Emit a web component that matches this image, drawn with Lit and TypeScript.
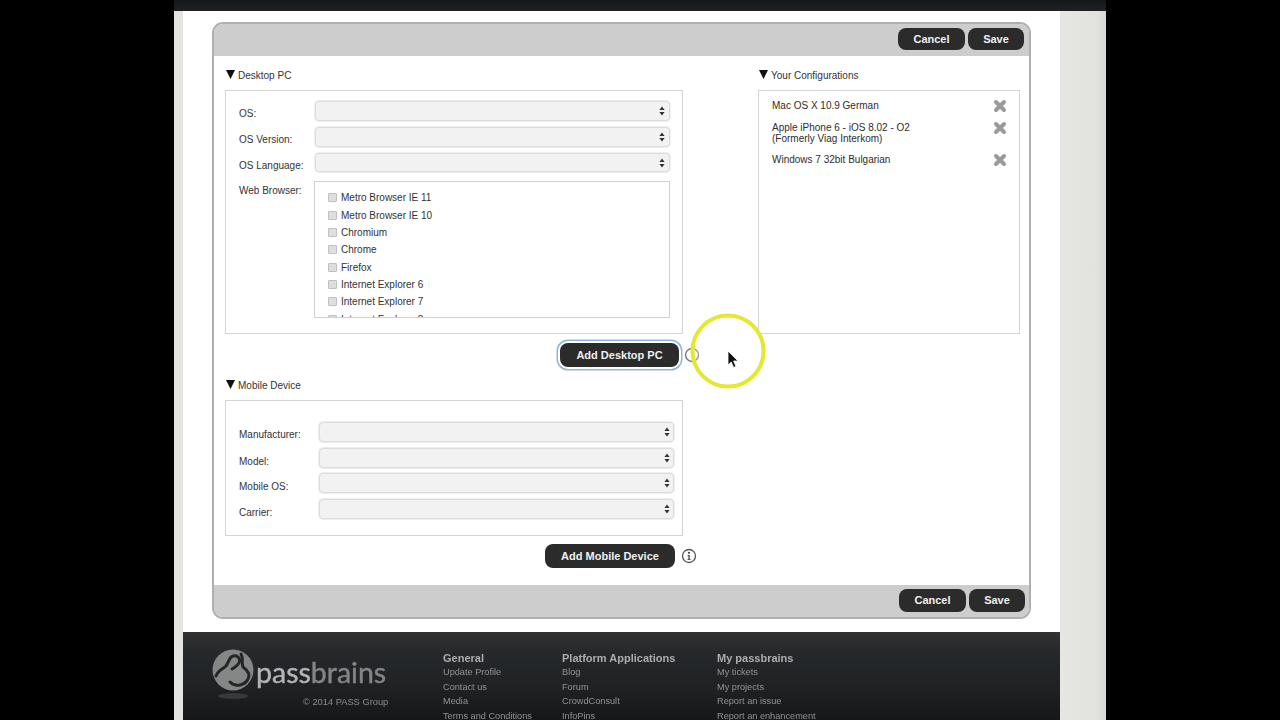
import { LitElement, html, css, svg } from "lit";
import { customElement } from "lit/decorators.js";

const arrows = html`<svg class="arrows" width="6" height="10" viewBox="0 0 6 10"><path d="M3 0.5 5.6 4H.4zM3 9.5 .4 6h5.2z" fill="#333"/></svg>`;
const tri = html`<svg class="tri" width="9" height="9" viewBox="0 0 9 9"><path d="M0 0h9L4.5 9z" fill="#111"/></svg>`;
const cross = html`<svg class="x" width="14" height="14" viewBox="0 0 14 14"><path d="M3 3l8 8M11 3l-8 8" stroke="#9a9a9a" stroke-width="4" stroke-linecap="round"/></svg>`;
const ring = html`<svg class="info" width="16" height="16" viewBox="0 0 16 16"><circle cx="8" cy="8" r="6.5" fill="none" stroke="#777" stroke-width="1.4"/></svg>`;
const infoIcon = html`<svg class="info" width="16" height="16" viewBox="0 0 16 16"><circle cx="8" cy="8" r="6.5" fill="none" stroke="#555" stroke-width="1.3"/><circle cx="8" cy="4.8" r="1.1" fill="#444"/><path d="M6.6 7h2.1v4.2h1v.9H6.4v-.9h1V7.9h-.8z" fill="#444"/></svg>`;
const logo = html`<svg class="mark" width="48" height="58" viewBox="0 0 48 58">
  <ellipse cx="24" cy="50" rx="15" ry="3" fill="#37393b"/>
  <circle cx="24" cy="24" r="20.5" fill="#858686"/>
  ${svg`<path d="M7 30C9 24 14 23 17 20C20 16 20 11 24 10C29 9 32 13 30 17C28 20 26 21 23 23" fill="none" stroke="#232527" stroke-width="3" stroke-linecap="round"/>
  <path d="M32 8C35 13 32 17 34 21C38 24 42 28 39 33C36 39 27 42 21 36" fill="none" stroke="#232527" stroke-width="3" stroke-linecap="round"/>`}
</svg>`;

const browsers = ["Metro Browser IE 11", "Metro Browser IE 10", "Chromium", "Chrome", "Firefox", "Internet Explorer 6", "Internet Explorer 7", "Internet Explorer 8"];
const desktopRows = ["OS:", "OS Version:", "OS Language:"];
const mobileRows = ["Manufacturer:", "Model:", "Mobile OS:", "Carrier:"];
const footerCols = [
  { cls: "c1", title: "General", items: ["Update Profile", "Contact us", "Media", "Terms and Conditions"] },
  { cls: "c2", title: "Platform Applications", items: ["Blog", "Forum", "CrowdConsult", "InfoPins"] },
  { cls: "c3", title: "My passbrains", items: ["My tickets", "My projects", "Report an issue", "Report an enhancement"] },
];

@customElement("app-root")
export class AppRoot extends LitElement {
  static styles = css`
    :host { display: block; width: 1280px; height: 720px; background: #000; overflow: hidden; position: relative;
      font-family: "Liberation Sans", Arial, sans-serif; font-size: 10px; color: #333; }
    .screen { width: 932px; height: 720px; margin-left: 174px; display: flex; flex-direction: column; filter: blur(0.45px); }
    .top { height: 11px; flex: none; background: linear-gradient(#15181a, #1e2123); }
    .mid { flex: 1; display: flex; min-height: 0; }
    .lstrip { width: 9px; background: #e3e3df; flex: none; }
    .rstrip { width: 46px; background: linear-gradient(90deg, #e6e6e3, #e2e2de 80%, #d8d8d4); flex: none; }
    .page { width: 877px; background: #fff; padding-top: 11px; display: flex; flex-direction: column; box-sizing: border-box; }
    .panel { width: 819px; height: 597px; margin-left: 29px; box-sizing: border-box; border: 2px solid #afafaf; border-radius: 11px; overflow: hidden; display: flex; flex-direction: column; flex: none; }
    .bar { height: 32px; background: #cdcdcd; display: flex; justify-content: flex-end; gap: 3px; flex: none; box-sizing: border-box; }
    .bar.t { padding: 4px 5px 0 0; }
    .bar.b { padding: 4px 4px 0 0; }
    .btn { height: 22px; border-radius: 8px; background: #2b2b2c; color: #f0f0f0; font-weight: bold; font-size: 11px; display: flex; align-items: center; justify-content: center; box-sizing: border-box; padding-bottom: 1px; }
    .bar.b .btn { height: 23px; }
    .cancel { width: 67px; }
    .save { width: 56px; }
    .content { flex: 1; display: flex; align-items: flex-start; padding-left: 11px; }
    .left { width: 458px; flex: none; }
    .right { width: 262px; margin-left: 75px; flex: none; }
    .head { height: 14px; margin-top: 12px; margin-bottom: 8px; display: flex; align-items: center; gap: 3px; padding-left: 1px; }
    .tri { flex: none; margin-top: -2px; }
    .box { box-sizing: border-box; border: 1px solid #d4d4d4; }
    .box.desk { height: 244px; padding: 9px 11px 0 13px; }
    .box.mob { height: 136px; padding: 20px 7px 0 13px; }
    .box.conf { height: 244px; padding: 9px 13px 0; display: flex; flex-direction: column; }
    .row { display: flex; margin-bottom: 4px; }
    .lab { flex: none; padding-top: 8px; line-height: 12px; }
    .desk .lab { width: 75px; }
    .mob .lab { width: 79px; padding-top: 9px; }
    .mob .row:first-child .lab { padding-top: 8px; }
    .sel { flex: 1; height: 18px; margin: 1px; box-sizing: content-box; background: #f2f2f2; border: 1px solid #dcdcdc; border-radius: 4px; box-shadow: 0 0 0 1px #eeeeee; display: flex; align-items: center; justify-content: flex-end; padding-right: 4px; }
    .mob .sel { padding-right: 3px; }
    .mob .row { margin-bottom: 3.6px; }
    .desk .row:nth-child(3) { margin-bottom: 8px; }
    .desk .row:nth-child(3) .sel { height: 17px; }
    .desk .lab.web { padding-top: 4px; }
    .list { flex: none; width: 356px; height: 137px; box-sizing: border-box; border: 1px solid #d0d0d0; overflow: hidden; padding: 7.35px 0 0 13px; }
    .item { height: 17.3px; display: flex; align-items: center; gap: 4px; }
    .cb { width: 9px; height: 9px; flex: none; box-sizing: border-box; background: #dedede; border: 1px solid #c0c0c0; border-radius: 1px; }
    .act { display: flex; align-items: center; gap: 5px; margin-top: 9px; height: 24px; }
    .act.d { padding-left: 335px; }
    .act.m { padding-left: 320px; margin-top: 8px; gap: 6px; }
    .info { flex: none; }
    .add { flex: none; height: 24px; border-radius: 8px; background: #2b2b2c; color: #f0f0f0; font-weight: bold; font-size: 11px; display: flex; align-items: center; justify-content: center; }
    .add.desk-b { width: 119px; box-shadow: 0 0 0 2px #fff, 0 0 0 3.5px #8fb6e0; }
    .add.mob-b { width: 130px; }
    .sec2 { margin-top: 11px; }
    .conf-row { display: flex; justify-content: space-between; line-height: 11px; color: #2d2d2d; }
    .conf-row.r1 { margin-bottom: 9px; }
    .conf-row.r2 { margin-bottom: 10px; }
    .x { flex: none; margin: -1px -1px 0 0; }
    .gap { height: 13px; flex: none; }
    .foot { height: 88px; flex: none; box-sizing: border-box; display: flex; background: linear-gradient(#313131 0, #26292c 20px, #1f2123 55px, #161718 100%); color: #929292; font-size: 9.2px; }
    .brand { width: 231px; margin-left: 29px; flex: none; position: relative; box-sizing: border-box; padding-top: 14px; }
    .brand-top { display: flex; align-items: flex-start; gap: 0; }
    .mark { margin-left: -3px; flex: none; }
    .word { font-family: Lato, sans-serif; font-size: 28.5px; line-height: 30px; margin-top: 11px; color: #b4b4b4; margin-left: -1px; -webkit-text-stroke: 0.4px currentColor; }
    .word span { color: #858585; }
    .copy { position: absolute; left: 91px; top: 65px; font-size: 9.3px; color: #8c8c8c; white-space: nowrap; }
    .col { flex: none; padding-top: 20px; }
    .col.c1 { width: 119px; }
    .col.c2 { width: 155px; }
    .col h4 { margin: 0; font-size: 11px; line-height: 13px; font-weight: bold; color: #adadad; }
    .col div { line-height: 14.5px; white-space: nowrap; }
    .over { position: absolute; left: 0; top: 0; pointer-events: none; }
  `;

  render() {
    return html`
      <div class="screen">
        <div class="top"></div>
        <div class="mid">
          <div class="lstrip"></div>
          <div class="page">
            <div class="panel">
              <div class="bar t"><div class="btn cancel">Cancel</div><div class="btn save">Save</div></div>
              <div class="content">
                <div class="left">
                  <div class="head">${tri}<span>Desktop PC</span></div>
                  <div class="box desk">
                    ${desktopRows.map((l) => html`<div class="row"><div class="lab">${l}</div><div class="sel">${arrows}</div></div>`)}
                    <div class="row">
                      <div class="lab web">Web Browser:</div>
                      <div class="list">
                        ${browsers.map((b) => html`<div class="item"><span class="cb"></span><span>${b}</span></div>`)}
                      </div>
                    </div>
                  </div>
                  <div class="act d"><div class="add desk-b">Add Desktop PC</div>${ring}</div>
                  <div class="head sec2">${tri}<span>Mobile Device</span></div>
                  <div class="box mob">
                    ${mobileRows.map((l) => html`<div class="row"><div class="lab">${l}</div><div class="sel">${arrows}</div></div>`)}
                  </div>
                  <div class="act m"><div class="add mob-b">Add Mobile Device</div>${infoIcon}</div>
                </div>
                <div class="right">
                  <div class="head">${tri}<span>Your Configurations</span></div>
                  <div class="box conf">
                    <div class="conf-row r1"><span>Mac OS X 10.9 German</span>${cross}</div>
                    <div class="conf-row r2"><span>Apple iPhone 6 - iOS 8.02 - O2<br />(Formerly Viag Interkom)</span>${cross}</div>
                    <div class="conf-row"><span>Windows 7 32bit Bulgarian</span>${cross}</div>
                  </div>
                </div>
              </div>
              <div class="bar b"><div class="btn cancel">Cancel</div><div class="btn save">Save</div></div>
            </div>
            <div class="gap"></div>
            <div class="foot">
              <div class="brand">
                <div class="brand-top">${logo}<div class="word">pass<span>brains</span></div></div>
                <div class="copy">© 2014 PASS Group</div>
              </div>
              ${footerCols.map((c) => html`<div class="col ${c.cls}"><h4>${c.title}</h4>${c.items.map((i) => html`<div>${i}</div>`)}</div>`)}
            </div>
          </div>
          <div class="rstrip"></div>
        </div>
      </div>
      <svg class="over" width="1280" height="720" viewBox="0 0 1280 720">
        <circle cx="728" cy="351" r="35.5" fill="rgba(255,255,255,.25)" stroke="#e5e830" stroke-width="4" />
        <path d="M728 351v14l3.2-3 2.4 5.4 2.4-1-2.4-5.4h4.4z" fill="#111" stroke="#fff" stroke-width=".8" />
      </svg>
    `;
  }
}
